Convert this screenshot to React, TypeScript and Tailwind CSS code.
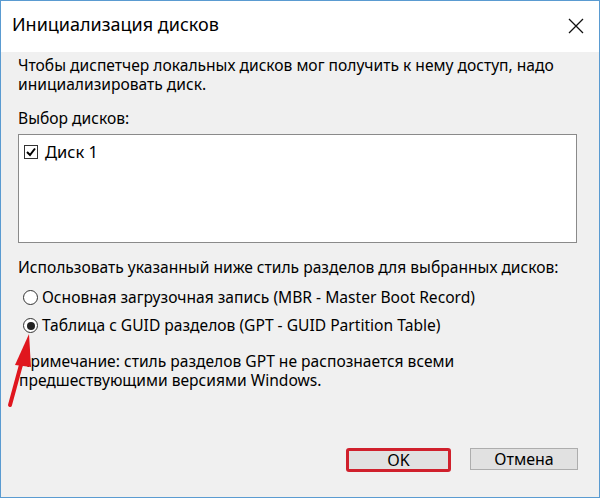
import React from "react";

const font = { fontFamily: '"Noto Sans", "Open Sans", sans-serif' };

function Radio({ checked }: { checked?: boolean }) {
  return (
    <span className="flex h-[15px] w-[15px] items-center justify-center rounded-full border border-[#333] bg-white">
      {checked && <span className="h-[8px] w-[8px] rounded-full bg-[#222]" />}
    </span>
  );
}

export default function App() {
  return (
    <div
      className="relative flex h-[498px] w-[600px] flex-col border border-[#5a9bd1] text-[15.6px] leading-[19px] text-black"
      style={font}
    >
      {/* title bar */}
      <div className="flex h-[51px] items-center justify-between bg-white pb-[4px] pl-[11px] pr-[14px]">
        <span className="text-[18px]">Инициализация дисков</span>
        <svg width="16" height="16" viewBox="0 0 16 16" className="mr-[1px] mt-[2px]">
          <path d="M1 1 L15 15 M15 1 L1 15" stroke="#111" strokeWidth="1.3" />
        </svg>
      </div>

      <div className="flex flex-1 flex-col bg-[#f0f0f0] px-[17px] pt-[4px] pb-[25px]">
        <p>
          Чтобы диспетчер локальных дисков мог получить к нему доступ, надо
          <br />
          инициализировать диск.
        </p>
        <p className="mt-[15px]">Выбор дисков:</p>
        <div className="mt-[6px] mr-[5px] h-[109px] border border-[#8a8a8a] bg-white px-[5px] pt-[7px]">
          <label className="flex items-center gap-[7px]">
            <span className="flex h-[14px] w-[14px] items-center justify-center border border-[#333] bg-white">
              <svg width="10" height="10" viewBox="0 0 10 10">
                <path d="M1 5 L4 8 L9 1.5" fill="none" stroke="#000" strokeWidth="2" />
              </svg>
            </span>
            <span className="text-[16.5px]">Диск 1</span>
          </label>
        </div>

        <p className="mt-[15px]">Использовать указанный ниже стиль разделов для выбранных дисков:</p>
        <div className="mt-[11px] flex flex-col gap-[9px] pl-[5px]">
          <label className="flex items-center gap-[4px]">
            <Radio />
            <span>Основная загрузочная запись (MBR - Master Boot Record)</span>
          </label>
          <label className="flex items-center gap-[4px]">
            <Radio checked />
            <span>Таблица с GUID разделов (GPT - GUID Partition Table)</span>
          </label>
        </div>

        <p className="mt-[17px] pl-[1px]">
          Примечание: стиль разделов GPT не распознается всеми
          <br />
          предшествующими версиями Windows.
        </p>

        <div className="mt-auto flex justify-end gap-[19px] pr-[4px]">
          <button className="h-[24px] w-[105px] rounded-[3px] border-[3px] border-[#d0202c] bg-[#e1e1e1] text-[16px] leading-none">
            OK
          </button>
          <button className="h-[22px] w-[108px] border border-[#adadad] bg-[#e1e1e1] text-[16px] leading-none">
            Отмена
          </button>
        </div>
      </div>

      {/* red arrow annotation */}
      <svg className="absolute left-0 top-[328px]" width="40" height="80" viewBox="0 0 40 80">
        <path d="M9 76 L21 32" stroke="#e0161e" strokeWidth="4" strokeLinecap="round" />
        <path d="M28 5 L14 36 L30 38 Z" fill="#e0161e" />
      </svg>
    </div>
  );
}
